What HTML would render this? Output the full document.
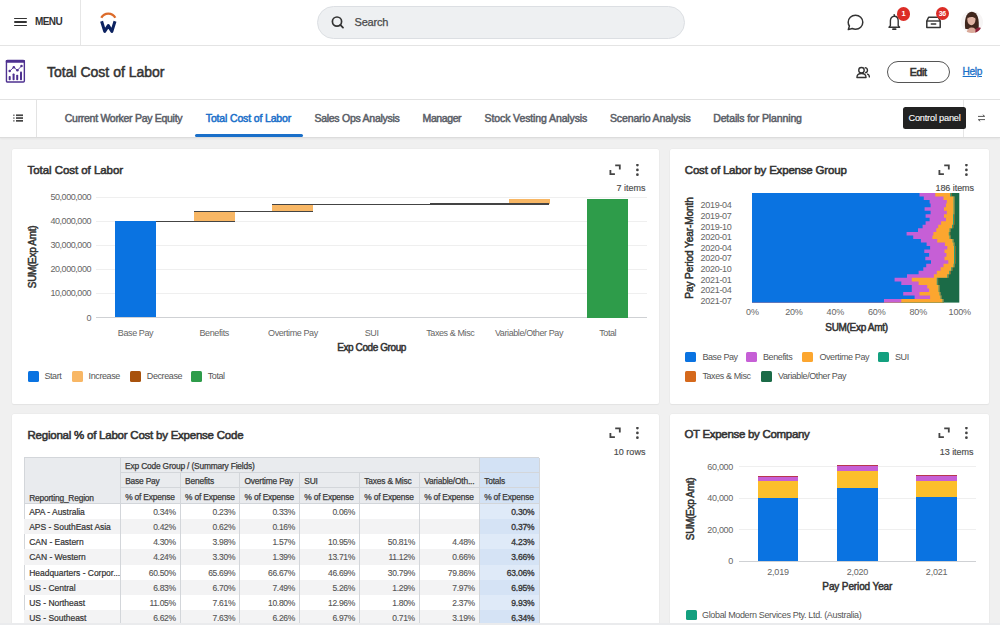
<!DOCTYPE html>
<html><head><meta charset="utf-8">
<style>
*{box-sizing:border-box;margin:0;padding:0}
html,body{width:1000px;height:625px;overflow:hidden;background:#f0f0f0;font-family:"Liberation Sans",sans-serif;color:#333}
.a{position:absolute}
.t{position:absolute;white-space:nowrap;line-height:20px;height:20px}
.b{font-weight:700}
#hdr{left:0;top:0;width:1000px;height:46px;background:#fff;border-bottom:1px solid #e4e4e4;box-shadow:0 1px 2px rgba(0,0,0,.04)}
#ttl{left:0;top:46px;width:1000px;height:54px;background:#fff;border-bottom:1px solid #e2e2e2}
#tabs{left:0;top:100px;width:1000px;height:38px;background:#fff;border-bottom:1px solid #dcdcdc;box-shadow:0 1px 2px rgba(0,0,0,.05)}
.card{position:absolute;background:#fff;border-radius:2px;box-shadow:0 0 0 0.5px #e8e8e8,0 1px 1px rgba(0,0,0,.07)}
.tab{top:107.6px;font-size:10.5px;font-weight:400;color:#5b6068;-webkit-text-stroke:0.5px #5b6068;letter-spacing:-0.29px}
.ctitle{font-size:11.5px;font-weight:400;color:#333;-webkit-text-stroke:0.55px #333;letter-spacing:-0.05px}
.ax{font-size:10px;font-weight:400;color:#333;-webkit-text-stroke:0.5px #333}
.sm{font-size:9px;color:#666;letter-spacing:-0.4px}
.grid{position:absolute;height:1px;background:#e8e8e8}
</style></head><body>

<!-- HEADER -->
<div id="hdr" class="a"></div>
<div class="a" style="left:14px;top:17.6px;width:13px;height:1.35px;background:#333;border-radius:1px"></div>
<div class="a" style="left:14px;top:21.4px;width:13px;height:1.35px;background:#333;border-radius:1px"></div>
<div class="a" style="left:14px;top:25.1px;width:13px;height:1.35px;background:#333;border-radius:1px"></div>
<div class="t b" style="left:35px;top:11.8px;font-size:10px;letter-spacing:-0.6px;color:#333">MENU</div>
<div class="a" style="left:80px;top:0;width:1px;height:45px;background:#e6e6e6"></div>
<svg class="a" style="left:98px;top:9px" width="22" height="26" viewBox="0 0 22 26">
  <path d="M3.3 8.8 A7.9 7.9 0 0 1 17.3 8.8" fill="none" stroke="#dc6b2a" stroke-width="2.3"/>
  <path d="M3.6 12.2 L6.7 22.4 L10.3 16.6 L13.9 22.4 L17 12.2" fill="none" stroke="#0c2260" stroke-width="3" stroke-linejoin="round"/>
</svg>
<div class="a" style="left:317px;top:5.5px;width:368px;height:33px;border-radius:17px;background:#eef0f2;border:1px solid #dcdfe3"></div>
<svg class="a" style="left:330px;top:15px" width="16" height="16" viewBox="0 0 16 16">
  <circle cx="7" cy="6.6" r="4.6" fill="none" stroke="#333" stroke-width="1.7"/>
  <path d="M10.3 9.9 L13 12.6" stroke="#333" stroke-width="1.8" stroke-linecap="round"/>
</svg>
<div class="t" style="left:354.5px;top:12px;font-size:11px;letter-spacing:-0.2px;color:#4a4a4a;-webkit-text-stroke:0.25px #4a4a4a">Search</div>

<!-- chat -->
<svg class="a" style="left:846px;top:13px" width="19" height="19" viewBox="0 0 19 19">
  <path d="M9.5 2.2 C13.6 2.2 16.8 5.2 16.8 9.2 C16.8 13.2 13.6 16.2 9.5 16.2 C8.3 16.2 7.2 15.9 6.2 15.5 L2.3 16.6 L3.4 13 C2.6 11.9 2.2 10.6 2.2 9.2 C2.2 5.2 5.4 2.2 9.5 2.2 Z" fill="none" stroke="#333" stroke-width="1.5" stroke-linejoin="round"/>
</svg>
<!-- bell -->
<svg class="a" style="left:886px;top:13px" width="17" height="18" viewBox="0 0 17 18">
  <path d="M4.4 12.6 L4.4 7.8 C4.4 5.2 6 3.3 8.3 3.3 C10.6 3.3 12.2 5.2 12.2 7.8 L12.2 12.6 L13.6 14.2 L3 14.2 Z" fill="none" stroke="#333" stroke-width="1.4" stroke-linejoin="round"/>
  <path d="M7 16.2 L9.6 16.2" stroke="#333" stroke-width="1.8" stroke-linecap="round"/>
  <path d="M8.3 1.6 L8.3 3" stroke="#333" stroke-width="1.4" stroke-linecap="round"/>
</svg>
<div class="a" style="left:896.7px;top:7px;width:13.6px;height:13.6px;border-radius:50%;background:#dc2d26"></div>
<div class="t b" style="left:896.7px;top:3.8px;width:13.6px;text-align:center;font-size:7.5px;color:#fff">1</div>
<!-- inbox -->
<svg class="a" style="left:925px;top:14px" width="17" height="16" viewBox="0 0 17 16">
  <path d="M1.8 7 L3.6 3.2 L13.4 3.2 L15.2 7 L15.2 13.6 L1.8 13.6 Z" fill="none" stroke="#333" stroke-width="1.5" stroke-linejoin="round"/>
  <path d="M1.8 7 L15.2 7" stroke="#333" stroke-width="1.4"/>
  <path d="M6.3 10 L10.7 10" stroke="#333" stroke-width="1.5" stroke-linecap="round"/>
</svg>
<div class="a" style="left:935.5px;top:6.7px;width:13.6px;height:13.6px;border-radius:50%;background:#dc2d26"></div>
<div class="t b" style="left:935.5px;top:3.5px;width:13.6px;text-align:center;font-size:7px;letter-spacing:-0.3px;color:#fff">36</div>
<!-- avatar -->
<svg class="a" style="left:961px;top:11px" width="22" height="22" viewBox="0 0 22 22">
  <defs><clipPath id="av"><circle cx="11" cy="11" r="11"/></clipPath></defs>
  <g clip-path="url(#av)">
    <rect width="22" height="22" fill="#f7f5f5"/>
    <path d="M4.2 17.8 C3.2 10 4.5 1.2 10.8 0.8 C17 1 18.4 9 17.6 17.8 C15 18.6 7 18.6 4.2 17.8 Z" fill="#3f261c"/>
    <path d="M5.5 22 C6 18.5 8 16.5 10.6 16.5 C13.5 16.5 15.6 18.5 16 22 Z" fill="#d9a999"/>
    <ellipse cx="10.4" cy="8.6" rx="4.1" ry="5.6" fill="#dfb3a3"/>
    <path d="M6.3 7.2 C6.8 3.6 8.8 2.6 11 2.7 C13.2 2.9 14.6 4.6 14.6 7.6 C13 5.8 9.5 5.3 6.3 7.2 Z" fill="#3f261c"/>
    <path d="M14.2 22 L14.6 18.2 C16 16.6 18 16.2 19.6 16.8 L20.5 22 Z" fill="#8c2038"/>
  </g>
</svg>

<!-- TITLE BAR -->
<div id="ttl" class="a"></div>
<svg class="a" style="left:5px;top:58.5px" width="21" height="25" viewBox="0 0 21 25">
  <rect x="1.45" y="1.55" width="17.9" height="21.4" rx="1" fill="#fff" stroke="#4e3190" stroke-width="1.4"/>
  <rect x="0.8" y="0.9" width="19.2" height="2.9" rx="0.8" fill="#4e3190"/>
  <path d="M4.7 12.1 L8.8 8.3 L12.4 11.3 L16.5 7" fill="none" stroke="#4e3190" stroke-width="0.9"/>
  <circle cx="4.7" cy="12.1" r="1.25" fill="#4e3190"/><circle cx="8.8" cy="8.3" r="1.25" fill="#4e3190"/><circle cx="12.4" cy="11.3" r="1.25" fill="#4e3190"/><circle cx="16.5" cy="7" r="1.25" fill="#4e3190"/>
  <rect x="3.7" y="17" width="2" height="4.2" rx="0.8" fill="#4e3190"/>
  <rect x="7.6" y="14.4" width="2" height="6.8" rx="0.8" fill="#4e3190"/>
  <rect x="11.2" y="15.7" width="2" height="5.5" rx="0.8" fill="#4e3190"/>
  <rect x="15" y="12.6" width="2" height="8.6" rx="0.8" fill="#4e3190"/>
</svg>
<div class="t" style="left:47px;top:61.5px;font-size:14px;letter-spacing:0px;color:#333;-webkit-text-stroke:0.5px #333">Total Cost of Labor</div>
<svg class="a" style="left:855.6px;top:66px" width="14.6" height="12.8" viewBox="0 0 16 14">
  <circle cx="6" cy="4.6" r="3" fill="none" stroke="#333" stroke-width="1.5"/>
  <path d="M1 12.6 C1 9.4 3.2 8.2 6 8.2 C8.8 8.2 11 9.4 11 12.6 Z" fill="none" stroke="#333" stroke-width="1.5" stroke-linejoin="round"/>
  <path d="M9.6 1.8 C11.6 1.9 12.6 3.2 12.6 4.6 C12.6 6 11.6 7.2 10 7.4" fill="none" stroke="#333" stroke-width="1.5"/>
  <path d="M12.2 8.6 C13.8 9.2 14.8 10.4 14.8 12.6" fill="none" stroke="#333" stroke-width="1.5"/>
</svg>
<div class="a" style="left:886.5px;top:60.8px;width:63.5px;height:22px;border-radius:11px;border:1.3px solid #555;background:#fff"></div>
<div class="t" style="left:886.5px;top:62px;width:63.5px;text-align:center;font-size:10.5px;letter-spacing:-0.3px;color:#333;-webkit-text-stroke:0.6px #333">Edit</div>
<div class="t" style="left:962.6px;top:62px;font-size:10.2px;letter-spacing:-0.4px;color:#1a70c8;-webkit-text-stroke:0.3px #1a70c8;text-decoration:underline;text-underline-offset:1px">Help</div>

<!-- TABS -->
<div id="tabs" class="a"></div>
<svg class="a" style="left:12px;top:113px" width="12" height="10" viewBox="0 0 12 10">
  <rect x="1.1" y="1.5" width="1.5" height="1.5" fill="#777"/><rect x="4" y="1.4" width="7" height="1.7" fill="#444"/>
  <rect x="1.1" y="4.3" width="1.5" height="1.5" fill="#777"/><rect x="4" y="4.2" width="7" height="1.7" fill="#444"/>
  <rect x="1.1" y="7.1" width="1.5" height="1.5" fill="#777"/><rect x="4" y="7" width="7" height="1.7" fill="#444"/>
</svg>
<div class="a" style="left:36px;top:100px;width:1px;height:37px;background:#e3e3e3"></div>
<div class="t tab" style="left:64.8px;letter-spacing:-0.29px">Current Worker Pay Equity</div>
<div class="t tab" style="left:205.8px;color:#1a6fc9;-webkit-text-stroke:0.5px #1a6fc9;letter-spacing:-0.15px">Total Cost of Labor</div>
<div class="a" style="left:194.5px;top:134.2px;width:108px;height:3px;border-radius:2px;background:#1a6fc9"></div>
<div class="t tab" style="left:314.4px;letter-spacing:-0.26px">Sales Ops Analysis</div>
<div class="t tab" style="left:422.6px;letter-spacing:-0.41px">Manager</div>
<div class="t tab" style="left:484.6px;letter-spacing:-0.11px">Stock Vesting Analysis</div>
<div class="t tab" style="left:610px;letter-spacing:-0.13px">Scenario Analysis</div>
<div class="t tab" style="left:713.2px;letter-spacing:-0.12px">Details for Planning</div>
<div class="a" style="left:962.5px;top:100px;width:1px;height:37px;background:#e6e6e6"></div>
<div class="a" style="left:903px;top:107px;width:63px;height:21.6px;border-radius:2.5px;background:#222"></div>
<div class="t" style="left:908.5px;top:108.3px;font-size:9.2px;letter-spacing:-0.2px;color:#fff;-webkit-text-stroke:0.1px #fff">Control panel</div>
<svg class="a" style="left:977px;top:114px" width="9" height="8" viewBox="0 0 9 8">
  <path d="M1 2.4 L7.6 2.4 M5.8 0.8 L7.8 2.4" fill="none" stroke="#555" stroke-width="1"/>
  <path d="M8 5.6 L1.4 5.6 M3.2 7.2 L1.2 5.6" fill="none" stroke="#555" stroke-width="1"/>
</svg>

<!-- CARDS -->
<div class="card" style="left:12px;top:149px;width:647px;height:254.5px"></div>
<div class="card" style="left:669.5px;top:149px;width:319px;height:254.5px"></div>
<div class="card" style="left:12px;top:413.5px;width:647px;height:220px"></div>
<div class="card" style="left:669.5px;top:413.5px;width:319px;height:220px"></div>

<!-- CARD1 CONTENT -->
<div class="t ctitle" style="left:27.5px;top:160px">Total Cost of Labor</div>
<svg class="a" style="left:608.5px;top:163.5px" width="34" height="13" viewBox="0 0 34 13"><path d="M6.2 1.4 L10.8 1.4 L10.8 5.6" fill="none" stroke="#444" stroke-width="1.8"/><path d="M1.4 6 L1.4 10.1 L5.9 10.1" fill="none" stroke="#444" stroke-width="1.8"/><circle cx="28.4" cy="1.1" r="1.35" fill="#444"/><circle cx="28.4" cy="5.9" r="1.35" fill="#444"/><circle cx="28.4" cy="10.7" r="1.35" fill="#444"/></svg>
<div class="t sm" style="left:545px;width:100.5px;text-align:right;top:177.5px;color:#4a4a4a;-webkit-text-stroke:0.15px #4a4a4a;letter-spacing:0">7 items</div>
<div class="grid" style="left:96px;top:317.00px;width:551px;background:#cfd1d4"></div>
<div class="t sm" style="left:20px;width:71px;text-align:right;top:307.50px;letter-spacing:-0.45px">0</div>
<div class="grid" style="left:96px;top:292.90px;width:551px;background:#efefef"></div>
<div class="t sm" style="left:20px;width:71px;text-align:right;top:283.40px;letter-spacing:-0.45px">10,000,000</div>
<div class="grid" style="left:96px;top:268.80px;width:551px;background:#efefef"></div>
<div class="t sm" style="left:20px;width:71px;text-align:right;top:259.30px;letter-spacing:-0.45px">20,000,000</div>
<div class="grid" style="left:96px;top:244.70px;width:551px;background:#efefef"></div>
<div class="t sm" style="left:20px;width:71px;text-align:right;top:235.20px;letter-spacing:-0.45px">30,000,000</div>
<div class="grid" style="left:96px;top:220.60px;width:551px;background:#efefef"></div>
<div class="t sm" style="left:20px;width:71px;text-align:right;top:211.10px;letter-spacing:-0.45px">40,000,000</div>
<div class="grid" style="left:96px;top:196.50px;width:551px;background:#efefef"></div>
<div class="t sm" style="left:20px;width:71px;text-align:right;top:187.00px;letter-spacing:-0.45px">50,000,000</div>
<div class="t ax" style="left:-7.5px;top:247.4px;width:80px;text-align:center;letter-spacing:-0.31px;transform:rotate(-90deg)">SUM(Exp Amt)</div>
<div class="a" style="left:193.70px;top:211.60px;width:41px;height:10.00px;background:#f8b765"></div>
<div class="a" style="left:272.40px;top:204.60px;width:41px;height:7.20px;background:#f8b765"></div>
<div class="a" style="left:351.10px;top:204.20px;width:41px;height:0.40px;background:#f8b765"></div>
<div class="a" style="left:429.80px;top:203.80px;width:41px;height:0.60px;background:#f8b765"></div>
<div class="a" style="left:508.50px;top:198.80px;width:41px;height:5.00px;background:#f8b765"></div>
<div class="a" style="left:115.00px;top:220.80px;width:119.70px;height:1.7px;background:#444"></div>
<div class="a" style="left:193.70px;top:210.80px;width:119.70px;height:1.7px;background:#444"></div>
<div class="a" style="left:272.40px;top:203.70px;width:119.70px;height:1.7px;background:#444"></div>
<div class="a" style="left:351.10px;top:203.50px;width:119.70px;height:1.7px;background:#444"></div>
<div class="a" style="left:429.80px;top:203.00px;width:119.70px;height:1.7px;background:#444"></div>
<div class="a" style="left:115.00px;top:220.90px;width:41px;height:96.60px;background:#0a73e1"></div>
<div class="a" style="left:587.20px;top:199.00px;width:41px;height:118.50px;background:#2e9c4a"></div>
<div class="t sm" style="left:85.50px;width:100px;text-align:center;top:323px">Base Pay</div>
<div class="t sm" style="left:164.20px;width:100px;text-align:center;top:323px">Benefits</div>
<div class="t sm" style="left:242.90px;width:100px;text-align:center;top:323px">Overtime Pay</div>
<div class="t sm" style="left:321.60px;width:100px;text-align:center;top:323px">SUI</div>
<div class="t sm" style="left:400.30px;width:100px;text-align:center;top:323px">Taxes &amp; Misc</div>
<div class="t sm" style="left:479.00px;width:100px;text-align:center;top:323px">Variable/Other Pay</div>
<div class="t sm" style="left:557.70px;width:100px;text-align:center;top:323px">Total</div>
<div class="t ax" style="left:321.6px;width:100px;text-align:center;top:337.8px;letter-spacing:-0.41px">Exp Code Group</div>
<div class="a" style="left:27.6px;top:370.8px;width:11px;height:11px;border-radius:1.5px;background:#0a73e1"></div>
<div class="t sm" style="left:44.4px;top:366.4px;color:#555">Start</div>
<div class="a" style="left:72px;top:370.8px;width:11px;height:11px;border-radius:1.5px;background:#f8b765"></div>
<div class="t sm" style="left:88.6px;top:366.4px;color:#555">Increase</div>
<div class="a" style="left:130px;top:370.8px;width:11px;height:11px;border-radius:1.5px;background:#a8520d"></div>
<div class="t sm" style="left:146.8px;top:366.4px;color:#555">Decrease</div>
<div class="a" style="left:191px;top:370.8px;width:11px;height:11px;border-radius:1.5px;background:#2e9c4a"></div>
<div class="t sm" style="left:207.7px;top:366.4px;color:#555">Total</div>
<!-- /CARD1 --><!-- /CARD1 --><!-- /CARD1 --><!-- /CARD1 --><!-- /CARD1 --><!-- /CARD1 --><!-- /CARD1 -->
<!-- CARD2 CONTENT -->
<div class="t ctitle" style="left:684.8px;top:160px;letter-spacing:-0.19px">Cost of Labor by Expense Group</div>
<svg class="a" style="left:937.5px;top:163.5px" width="34" height="13" viewBox="0 0 34 13"><path d="M6.2 1.4 L10.8 1.4 L10.8 5.6" fill="none" stroke="#444" stroke-width="1.8"/><path d="M1.4 6 L1.4 10.1 L5.9 10.1" fill="none" stroke="#444" stroke-width="1.8"/><circle cx="28.4" cy="1.1" r="1.35" fill="#444"/><circle cx="28.4" cy="5.9" r="1.35" fill="#444"/><circle cx="28.4" cy="10.7" r="1.35" fill="#444"/></svg>
<div class="t sm" style="left:874px;width:100px;text-align:right;top:178px;color:#4a4a4a;-webkit-text-stroke:0.15px #4a4a4a;letter-spacing:-0.05px">186 items</div>
<svg class="a" style="left:752.4px;top:193.0px" width="207.3" height="110" viewBox="0 0 207.30 110"><rect x="0" y="0" width="207.30" height="109.60" fill="#1b6b47"/><path d="M0.00 0.00 L199.60 0.00 L199.60 3.54 L203.00 3.54 L203.00 7.07 L203.00 7.07 L203.00 10.61 L203.00 10.61 L203.00 14.14 L203.00 14.14 L203.00 17.68 L203.00 17.68 L203.00 21.21 L202.50 21.21 L202.50 24.75 L202.50 24.75 L202.50 28.28 L202.50 28.28 L202.50 31.82 L201.50 31.82 L201.50 35.35 L199.00 35.35 L199.00 38.89 L198.20 38.89 L198.20 42.43 L199.00 42.43 L199.00 45.96 L202.00 45.96 L202.00 49.50 L203.00 49.50 L203.00 53.03 L203.50 53.03 L203.50 56.57 L203.50 56.57 L203.50 60.10 L203.50 60.10 L203.50 63.64 L203.50 63.64 L203.50 67.17 L203.50 67.17 L203.50 70.71 L203.00 70.71 L203.00 74.25 L200.60 74.25 L200.60 77.78 L198.70 77.78 L198.70 81.32 L196.70 81.32 L196.70 84.85 L186.20 84.85 L186.20 88.39 L186.20 88.39 L186.20 91.92 L188.00 91.92 L188.00 95.46 L188.00 95.46 L188.00 98.99 L189.00 98.99 L189.00 102.53 L190.00 102.53 L190.00 106.06 L192.00 106.06 L192.00 109.60 L0.00 109.60 Z" fill="#d5691c"/><path d="M0.00 0.00 L199.10 0.00 L199.10 3.54 L202.50 3.54 L202.50 7.07 L202.50 7.07 L202.50 10.61 L202.50 10.61 L202.50 14.14 L202.50 14.14 L202.50 17.68 L202.50 17.68 L202.50 21.21 L202.00 21.21 L202.00 24.75 L202.00 24.75 L202.00 28.28 L202.00 28.28 L202.00 31.82 L201.00 31.82 L201.00 35.35 L198.50 35.35 L198.50 38.89 L197.70 38.89 L197.70 42.43 L198.50 42.43 L198.50 45.96 L201.50 45.96 L201.50 49.50 L202.50 49.50 L202.50 53.03 L203.00 53.03 L203.00 56.57 L203.00 56.57 L203.00 60.10 L203.00 60.10 L203.00 63.64 L203.00 63.64 L203.00 67.17 L203.00 67.17 L203.00 70.71 L202.50 70.71 L202.50 74.25 L200.10 74.25 L200.10 77.78 L198.20 77.78 L198.20 81.32 L196.20 81.32 L196.20 84.85 L185.70 84.85 L185.70 88.39 L185.70 88.39 L185.70 91.92 L187.50 91.92 L187.50 95.46 L187.50 95.46 L187.50 98.99 L188.50 98.99 L188.50 102.53 L189.50 102.53 L189.50 106.06 L191.50 106.06 L191.50 109.60 L0.00 109.60 Z" fill="#13a07f"/><path d="M0.00 0.00 L198.20 0.00 L198.20 3.54 L201.60 3.54 L201.60 7.07 L201.60 7.07 L201.60 10.61 L201.60 10.61 L201.60 14.14 L201.60 14.14 L201.60 17.68 L201.60 17.68 L201.60 21.21 L201.10 21.21 L201.10 24.75 L201.10 24.75 L201.10 28.28 L201.10 28.28 L201.10 31.82 L200.10 31.82 L200.10 35.35 L197.60 35.35 L197.60 38.89 L196.80 38.89 L196.80 42.43 L197.60 42.43 L197.60 45.96 L200.60 45.96 L200.60 49.50 L201.60 49.50 L201.60 53.03 L202.10 53.03 L202.10 56.57 L202.10 56.57 L202.10 60.10 L202.10 60.10 L202.10 63.64 L202.10 63.64 L202.10 67.17 L202.10 67.17 L202.10 70.71 L201.60 70.71 L201.60 74.25 L199.20 74.25 L199.20 77.78 L197.30 77.78 L197.30 81.32 L195.30 81.32 L195.30 84.85 L184.80 84.85 L184.80 88.39 L184.80 88.39 L184.80 91.92 L186.60 91.92 L186.60 95.46 L186.60 95.46 L186.60 98.99 L187.60 98.99 L187.60 102.53 L188.60 102.53 L188.60 106.06 L190.60 106.06 L190.60 109.60 L0.00 109.60 Z" fill="#fca62f"/><path d="M0.00 0.00 L183.30 0.00 L183.30 3.54 L191.50 3.54 L191.50 7.07 L194.80 7.07 L194.80 10.61 L193.90 10.61 L193.90 14.14 L192.00 14.14 L192.00 17.68 L194.80 17.68 L194.80 21.21 L192.00 21.21 L192.00 24.75 L193.90 24.75 L193.90 28.28 L189.10 28.28 L189.10 31.82 L186.20 31.82 L186.20 35.35 L184.30 35.35 L184.30 38.89 L181.40 38.89 L181.40 42.43 L180.40 42.43 L180.40 45.96 L185.20 45.96 L185.20 49.50 L192.90 49.50 L192.90 53.03 L195.30 53.03 L195.30 56.57 L192.50 56.57 L192.50 60.10 L194.40 60.10 L194.40 63.64 L192.50 63.64 L192.50 67.17 L196.30 67.17 L196.30 70.71 L191.50 70.71 L191.50 74.25 L188.60 74.25 L188.60 77.78 L184.80 77.78 L184.80 81.32 L181.90 81.32 L181.90 84.85 L159.80 84.85 L159.80 88.39 L166.60 88.39 L166.60 91.92 L175.20 91.92 L175.20 95.46 L177.10 95.46 L177.10 98.99 L167.50 98.99 L167.50 102.53 L178.10 102.53 L178.10 106.06 L149.30 106.06 L149.30 109.60 L0.00 109.60 Z" fill="#c65fd6"/><path d="M0.00 0.00 L167.50 0.00 L167.50 3.54 L171.80 3.54 L171.80 7.07 L177.60 7.07 L177.60 10.61 L178.60 10.61 L178.60 14.14 L172.60 14.14 L172.60 17.68 L178.60 17.68 L178.60 21.21 L173.60 21.21 L173.60 24.75 L177.60 24.75 L177.60 28.28 L173.60 28.28 L173.60 31.82 L170.60 31.82 L170.60 35.35 L166.00 35.35 L166.00 38.89 L154.60 38.89 L154.60 42.43 L161.20 42.43 L161.20 45.96 L168.90 45.96 L168.90 49.50 L174.60 49.50 L174.60 53.03 L178.10 53.03 L178.10 56.57 L172.30 56.57 L172.30 60.10 L177.10 60.10 L177.10 63.64 L173.30 63.64 L173.30 67.17 L179.00 67.17 L179.00 70.71 L174.20 70.71 L174.20 74.25 L171.30 74.25 L171.30 77.78 L166.60 77.78 L166.60 81.32 L155.00 81.32 L155.00 84.85 L142.60 84.85 L142.60 88.39 L149.30 88.39 L149.30 91.92 L159.80 91.92 L159.80 95.46 L159.80 95.46 L159.80 98.99 L151.20 98.99 L151.20 102.53 L162.60 102.53 L162.60 106.06 L132.00 106.06 L132.00 109.60 L0.00 109.60 Z" fill="#0a73e1"/></svg>
<div class="t sm" style="left:680px;width:51.5px;text-align:right;top:195.37px;letter-spacing:-0.3px">2019-04</div>
<div class="t sm" style="left:680px;width:51.5px;text-align:right;top:205.98px;letter-spacing:-0.3px">2019-07</div>
<div class="t sm" style="left:680px;width:51.5px;text-align:right;top:216.59px;letter-spacing:-0.3px">2019-10</div>
<div class="t sm" style="left:680px;width:51.5px;text-align:right;top:227.19px;letter-spacing:-0.3px">2020-01</div>
<div class="t sm" style="left:680px;width:51.5px;text-align:right;top:237.80px;letter-spacing:-0.3px">2020-04</div>
<div class="t sm" style="left:680px;width:51.5px;text-align:right;top:248.41px;letter-spacing:-0.3px">2020-07</div>
<div class="t sm" style="left:680px;width:51.5px;text-align:right;top:259.01px;letter-spacing:-0.3px">2020-10</div>
<div class="t sm" style="left:680px;width:51.5px;text-align:right;top:269.62px;letter-spacing:-0.3px">2021-01</div>
<div class="t sm" style="left:680px;width:51.5px;text-align:right;top:280.23px;letter-spacing:-0.3px">2021-04</div>
<div class="t sm" style="left:680px;width:51.5px;text-align:right;top:290.83px;letter-spacing:-0.3px">2021-07</div>
<div class="t sm" style="left:727.40px;width:50px;text-align:center;top:302px;letter-spacing:-0.2px">0%</div>
<div class="t sm" style="left:768.86px;width:50px;text-align:center;top:302px;letter-spacing:-0.2px">20%</div>
<div class="t sm" style="left:810.32px;width:50px;text-align:center;top:302px;letter-spacing:-0.2px">40%</div>
<div class="t sm" style="left:851.78px;width:50px;text-align:center;top:302px;letter-spacing:-0.2px">60%</div>
<div class="t sm" style="left:893.24px;width:50px;text-align:center;top:302px;letter-spacing:-0.2px">80%</div>
<div class="t sm" style="left:934.70px;width:50px;text-align:center;top:302px;letter-spacing:-0.2px">100%</div>
<div class="t ax" style="left:806.5px;width:100px;text-align:center;top:318px;letter-spacing:-0.31px">SUM(Exp Amt)</div>
<div class="t ax" style="left:630px;top:237.7px;width:120px;text-align:center;letter-spacing:-0.07px;transform:rotate(-90deg)">Pay Period Year-Month</div>
<div class="a" style="left:685.4px;top:351.8px;width:11px;height:10.5px;border-radius:1.5px;background:#0a73e1"></div>
<div class="t sm" style="left:702.4px;top:347.00px;color:#555">Base Pay</div>
<div class="a" style="left:746px;top:351.8px;width:11px;height:10.5px;border-radius:1.5px;background:#c65fd6"></div>
<div class="t sm" style="left:763px;top:347.00px;color:#555">Benefits</div>
<div class="a" style="left:802.4px;top:351.8px;width:11px;height:10.5px;border-radius:1.5px;background:#fca62f"></div>
<div class="t sm" style="left:819.4px;top:347.00px;color:#555">Overtime Pay</div>
<div class="a" style="left:878.4px;top:351.8px;width:11px;height:10.5px;border-radius:1.5px;background:#13a07f"></div>
<div class="t sm" style="left:895px;top:347.00px;color:#555">SUI</div>
<div class="a" style="left:685.4px;top:371px;width:11px;height:10.5px;border-radius:1.5px;background:#d5691c"></div>
<div class="t sm" style="left:702.4px;top:366.20px;color:#555">Taxes &amp; Misc</div>
<div class="a" style="left:761px;top:371px;width:11px;height:10.5px;border-radius:1.5px;background:#1b6b47"></div>
<div class="t sm" style="left:778px;top:366.20px;color:#555">Variable/Other Pay</div>
<!-- /CARD2 -->
<!-- CARD3 CONTENT -->
<div class="t ctitle" style="left:27.5px;top:424.5px;letter-spacing:-0.23px">Regional % of Labor Cost by Expense Code</div>
<svg class="a" style="left:608.7px;top:427.3px" width="34" height="13" viewBox="0 0 34 13"><path d="M6.2 1.4 L10.8 1.4 L10.8 5.6" fill="none" stroke="#444" stroke-width="1.8"/><path d="M1.4 6 L1.4 10.1 L5.9 10.1" fill="none" stroke="#444" stroke-width="1.8"/><circle cx="28.4" cy="1.1" r="1.35" fill="#444"/><circle cx="28.4" cy="5.9" r="1.35" fill="#444"/><circle cx="28.4" cy="10.7" r="1.35" fill="#444"/></svg>
<div class="t sm" style="left:545px;width:100.5px;text-align:right;top:442.2px;color:#4a4a4a;-webkit-text-stroke:0.15px #4a4a4a;letter-spacing:0.05px">10 rows</div>
<div class="a" style="left:24.4px;top:457.7px;width:514.6px;height:45.9px;background:#e9ebee"></div>
<div class="a" style="left:479.5px;top:457.7px;width:59.5px;height:45.9px;background:#d3e2f5"></div>
<div class="a" style="left:24.4px;top:457.2px;width:514.6px;height:1px;background:#d3d6da"></div>
<div class="a" style="left:23.9px;top:457.7px;width:1px;height:167.3px;background:#d3d6da"></div>
<div class="a" style="left:120.5px;top:471.8px;width:418.5px;height:1px;background:#d3d6da"></div>
<div class="a" style="left:120.5px;top:487.1px;width:418.5px;height:1px;background:#d3d6da"></div>
<div class="a" style="left:24.4px;top:503.1px;width:514.6px;height:1px;background:#d3d6da"></div>
<div class="a" style="left:479.5px;top:503.60px;width:59.5px;height:15.25px;background:#dfeaf8"></div>
<div class="t" style="left:29.2px;top:501.73px;font-size:8.5px;letter-spacing:-0.03px;color:#333;-webkit-text-stroke:0.2px #333">APA - Australia</div>
<div class="t" style="left:115.80px;width:60px;text-align:right;top:501.73px;font-size:8.5px;color:#555;-webkit-text-stroke:0.12px #555;letter-spacing:-0.3px">0.34%</div>
<div class="t" style="left:175.20px;width:60px;text-align:right;top:501.73px;font-size:8.5px;color:#555;-webkit-text-stroke:0.12px #555;letter-spacing:-0.3px">0.23%</div>
<div class="t" style="left:235.00px;width:60px;text-align:right;top:501.73px;font-size:8.5px;color:#555;-webkit-text-stroke:0.12px #555;letter-spacing:-0.3px">0.33%</div>
<div class="t" style="left:295.00px;width:60px;text-align:right;top:501.73px;font-size:8.5px;color:#555;-webkit-text-stroke:0.12px #555;letter-spacing:-0.3px">0.06%</div>
<div class="t" style="left:474.40px;width:60px;text-align:right;top:501.73px;font-size:8.5px;color:#333;-webkit-text-stroke:0.3px #333;letter-spacing:-0.2px">0.30%</div>
<div class="a" style="left:24.4px;top:518.85px;width:455.1px;height:15.25px;background:#f3f3f4"></div>
<div class="a" style="left:479.5px;top:518.85px;width:59.5px;height:15.25px;background:#d5e3f5"></div>
<div class="t" style="left:29.2px;top:516.98px;font-size:8.5px;letter-spacing:-0.03px;color:#333;-webkit-text-stroke:0.2px #333">APS - SouthEast Asia</div>
<div class="t" style="left:115.80px;width:60px;text-align:right;top:516.98px;font-size:8.5px;color:#555;-webkit-text-stroke:0.12px #555;letter-spacing:-0.3px">0.42%</div>
<div class="t" style="left:175.20px;width:60px;text-align:right;top:516.98px;font-size:8.5px;color:#555;-webkit-text-stroke:0.12px #555;letter-spacing:-0.3px">0.62%</div>
<div class="t" style="left:235.00px;width:60px;text-align:right;top:516.98px;font-size:8.5px;color:#555;-webkit-text-stroke:0.12px #555;letter-spacing:-0.3px">0.16%</div>
<div class="t" style="left:474.40px;width:60px;text-align:right;top:516.98px;font-size:8.5px;color:#333;-webkit-text-stroke:0.3px #333;letter-spacing:-0.2px">0.37%</div>
<div class="a" style="left:479.5px;top:534.10px;width:59.5px;height:15.25px;background:#dfeaf8"></div>
<div class="t" style="left:29.2px;top:532.23px;font-size:8.5px;letter-spacing:-0.03px;color:#333;-webkit-text-stroke:0.2px #333">CAN - Eastern</div>
<div class="t" style="left:115.80px;width:60px;text-align:right;top:532.23px;font-size:8.5px;color:#555;-webkit-text-stroke:0.12px #555;letter-spacing:-0.3px">4.30%</div>
<div class="t" style="left:175.20px;width:60px;text-align:right;top:532.23px;font-size:8.5px;color:#555;-webkit-text-stroke:0.12px #555;letter-spacing:-0.3px">3.98%</div>
<div class="t" style="left:235.00px;width:60px;text-align:right;top:532.23px;font-size:8.5px;color:#555;-webkit-text-stroke:0.12px #555;letter-spacing:-0.3px">1.57%</div>
<div class="t" style="left:295.00px;width:60px;text-align:right;top:532.23px;font-size:8.5px;color:#555;-webkit-text-stroke:0.12px #555;letter-spacing:-0.3px">10.95%</div>
<div class="t" style="left:354.90px;width:60px;text-align:right;top:532.23px;font-size:8.5px;color:#555;-webkit-text-stroke:0.12px #555;letter-spacing:-0.3px">50.81%</div>
<div class="t" style="left:414.90px;width:60px;text-align:right;top:532.23px;font-size:8.5px;color:#555;-webkit-text-stroke:0.12px #555;letter-spacing:-0.3px">4.48%</div>
<div class="t" style="left:474.40px;width:60px;text-align:right;top:532.23px;font-size:8.5px;color:#333;-webkit-text-stroke:0.3px #333;letter-spacing:-0.2px">4.23%</div>
<div class="a" style="left:24.4px;top:549.35px;width:455.1px;height:15.25px;background:#f3f3f4"></div>
<div class="a" style="left:479.5px;top:549.35px;width:59.5px;height:15.25px;background:#d5e3f5"></div>
<div class="t" style="left:29.2px;top:547.48px;font-size:8.5px;letter-spacing:-0.03px;color:#333;-webkit-text-stroke:0.2px #333">CAN - Western</div>
<div class="t" style="left:115.80px;width:60px;text-align:right;top:547.48px;font-size:8.5px;color:#555;-webkit-text-stroke:0.12px #555;letter-spacing:-0.3px">4.24%</div>
<div class="t" style="left:175.20px;width:60px;text-align:right;top:547.48px;font-size:8.5px;color:#555;-webkit-text-stroke:0.12px #555;letter-spacing:-0.3px">3.30%</div>
<div class="t" style="left:235.00px;width:60px;text-align:right;top:547.48px;font-size:8.5px;color:#555;-webkit-text-stroke:0.12px #555;letter-spacing:-0.3px">1.39%</div>
<div class="t" style="left:295.00px;width:60px;text-align:right;top:547.48px;font-size:8.5px;color:#555;-webkit-text-stroke:0.12px #555;letter-spacing:-0.3px">13.71%</div>
<div class="t" style="left:354.90px;width:60px;text-align:right;top:547.48px;font-size:8.5px;color:#555;-webkit-text-stroke:0.12px #555;letter-spacing:-0.3px">11.12%</div>
<div class="t" style="left:414.90px;width:60px;text-align:right;top:547.48px;font-size:8.5px;color:#555;-webkit-text-stroke:0.12px #555;letter-spacing:-0.3px">0.66%</div>
<div class="t" style="left:474.40px;width:60px;text-align:right;top:547.48px;font-size:8.5px;color:#333;-webkit-text-stroke:0.3px #333;letter-spacing:-0.2px">3.66%</div>
<div class="a" style="left:479.5px;top:564.60px;width:59.5px;height:15.25px;background:#dfeaf8"></div>
<div class="t" style="left:29.2px;top:562.73px;font-size:8.5px;letter-spacing:-0.03px;color:#333;-webkit-text-stroke:0.2px #333">Headquarters - Corpor...</div>
<div class="t" style="left:115.80px;width:60px;text-align:right;top:562.73px;font-size:8.5px;color:#555;-webkit-text-stroke:0.12px #555;letter-spacing:-0.3px">60.50%</div>
<div class="t" style="left:175.20px;width:60px;text-align:right;top:562.73px;font-size:8.5px;color:#555;-webkit-text-stroke:0.12px #555;letter-spacing:-0.3px">65.69%</div>
<div class="t" style="left:235.00px;width:60px;text-align:right;top:562.73px;font-size:8.5px;color:#555;-webkit-text-stroke:0.12px #555;letter-spacing:-0.3px">66.67%</div>
<div class="t" style="left:295.00px;width:60px;text-align:right;top:562.73px;font-size:8.5px;color:#555;-webkit-text-stroke:0.12px #555;letter-spacing:-0.3px">46.69%</div>
<div class="t" style="left:354.90px;width:60px;text-align:right;top:562.73px;font-size:8.5px;color:#555;-webkit-text-stroke:0.12px #555;letter-spacing:-0.3px">30.79%</div>
<div class="t" style="left:414.90px;width:60px;text-align:right;top:562.73px;font-size:8.5px;color:#555;-webkit-text-stroke:0.12px #555;letter-spacing:-0.3px">79.86%</div>
<div class="t" style="left:474.40px;width:60px;text-align:right;top:562.73px;font-size:8.5px;color:#333;-webkit-text-stroke:0.3px #333;letter-spacing:-0.2px">63.06%</div>
<div class="a" style="left:24.4px;top:579.85px;width:455.1px;height:15.25px;background:#f3f3f4"></div>
<div class="a" style="left:479.5px;top:579.85px;width:59.5px;height:15.25px;background:#d5e3f5"></div>
<div class="t" style="left:29.2px;top:577.98px;font-size:8.5px;letter-spacing:-0.03px;color:#333;-webkit-text-stroke:0.2px #333">US - Central</div>
<div class="t" style="left:115.80px;width:60px;text-align:right;top:577.98px;font-size:8.5px;color:#555;-webkit-text-stroke:0.12px #555;letter-spacing:-0.3px">6.83%</div>
<div class="t" style="left:175.20px;width:60px;text-align:right;top:577.98px;font-size:8.5px;color:#555;-webkit-text-stroke:0.12px #555;letter-spacing:-0.3px">6.70%</div>
<div class="t" style="left:235.00px;width:60px;text-align:right;top:577.98px;font-size:8.5px;color:#555;-webkit-text-stroke:0.12px #555;letter-spacing:-0.3px">7.49%</div>
<div class="t" style="left:295.00px;width:60px;text-align:right;top:577.98px;font-size:8.5px;color:#555;-webkit-text-stroke:0.12px #555;letter-spacing:-0.3px">5.26%</div>
<div class="t" style="left:354.90px;width:60px;text-align:right;top:577.98px;font-size:8.5px;color:#555;-webkit-text-stroke:0.12px #555;letter-spacing:-0.3px">1.29%</div>
<div class="t" style="left:414.90px;width:60px;text-align:right;top:577.98px;font-size:8.5px;color:#555;-webkit-text-stroke:0.12px #555;letter-spacing:-0.3px">7.97%</div>
<div class="t" style="left:474.40px;width:60px;text-align:right;top:577.98px;font-size:8.5px;color:#333;-webkit-text-stroke:0.3px #333;letter-spacing:-0.2px">6.95%</div>
<div class="a" style="left:479.5px;top:595.10px;width:59.5px;height:15.25px;background:#dfeaf8"></div>
<div class="t" style="left:29.2px;top:593.23px;font-size:8.5px;letter-spacing:-0.03px;color:#333;-webkit-text-stroke:0.2px #333">US - Northeast</div>
<div class="t" style="left:115.80px;width:60px;text-align:right;top:593.23px;font-size:8.5px;color:#555;-webkit-text-stroke:0.12px #555;letter-spacing:-0.3px">11.05%</div>
<div class="t" style="left:175.20px;width:60px;text-align:right;top:593.23px;font-size:8.5px;color:#555;-webkit-text-stroke:0.12px #555;letter-spacing:-0.3px">7.61%</div>
<div class="t" style="left:235.00px;width:60px;text-align:right;top:593.23px;font-size:8.5px;color:#555;-webkit-text-stroke:0.12px #555;letter-spacing:-0.3px">10.80%</div>
<div class="t" style="left:295.00px;width:60px;text-align:right;top:593.23px;font-size:8.5px;color:#555;-webkit-text-stroke:0.12px #555;letter-spacing:-0.3px">12.96%</div>
<div class="t" style="left:354.90px;width:60px;text-align:right;top:593.23px;font-size:8.5px;color:#555;-webkit-text-stroke:0.12px #555;letter-spacing:-0.3px">1.80%</div>
<div class="t" style="left:414.90px;width:60px;text-align:right;top:593.23px;font-size:8.5px;color:#555;-webkit-text-stroke:0.12px #555;letter-spacing:-0.3px">2.37%</div>
<div class="t" style="left:474.40px;width:60px;text-align:right;top:593.23px;font-size:8.5px;color:#333;-webkit-text-stroke:0.3px #333;letter-spacing:-0.2px">9.93%</div>
<div class="a" style="left:24.4px;top:610.35px;width:455.1px;height:15.25px;background:#f3f3f4"></div>
<div class="a" style="left:479.5px;top:610.35px;width:59.5px;height:15.25px;background:#d5e3f5"></div>
<div class="t" style="left:29.2px;top:608.48px;font-size:8.5px;letter-spacing:-0.03px;color:#333;-webkit-text-stroke:0.2px #333">US - Southeast</div>
<div class="t" style="left:115.80px;width:60px;text-align:right;top:608.48px;font-size:8.5px;color:#555;-webkit-text-stroke:0.12px #555;letter-spacing:-0.3px">6.62%</div>
<div class="t" style="left:175.20px;width:60px;text-align:right;top:608.48px;font-size:8.5px;color:#555;-webkit-text-stroke:0.12px #555;letter-spacing:-0.3px">7.63%</div>
<div class="t" style="left:235.00px;width:60px;text-align:right;top:608.48px;font-size:8.5px;color:#555;-webkit-text-stroke:0.12px #555;letter-spacing:-0.3px">6.26%</div>
<div class="t" style="left:295.00px;width:60px;text-align:right;top:608.48px;font-size:8.5px;color:#555;-webkit-text-stroke:0.12px #555;letter-spacing:-0.3px">6.97%</div>
<div class="t" style="left:354.90px;width:60px;text-align:right;top:608.48px;font-size:8.5px;color:#555;-webkit-text-stroke:0.12px #555;letter-spacing:-0.3px">0.71%</div>
<div class="t" style="left:414.90px;width:60px;text-align:right;top:608.48px;font-size:8.5px;color:#555;-webkit-text-stroke:0.12px #555;letter-spacing:-0.3px">3.19%</div>
<div class="t" style="left:474.40px;width:60px;text-align:right;top:608.48px;font-size:8.5px;color:#333;-webkit-text-stroke:0.3px #333;letter-spacing:-0.2px">6.34%</div>
<div class="a" style="left:120.00px;top:457.7px;width:1px;height:167.3px;background:#d3d6da"></div>
<div class="a" style="left:179.90px;top:472.3px;width:1px;height:152.7px;background:#d3d6da"></div>
<div class="a" style="left:239.30px;top:472.3px;width:1px;height:152.7px;background:#d3d6da"></div>
<div class="a" style="left:299.10px;top:472.3px;width:1px;height:152.7px;background:#d3d6da"></div>
<div class="a" style="left:359.10px;top:472.3px;width:1px;height:152.7px;background:#d3d6da"></div>
<div class="a" style="left:419.00px;top:472.3px;width:1px;height:152.7px;background:#d3d6da"></div>
<div class="a" style="left:479.00px;top:457.7px;width:1px;height:167.3px;background:#d3d6da"></div>
<div class="a" style="left:538.50px;top:457.7px;width:1px;height:167.3px;background:#d3d6da"></div>
<div class="t" style="left:125.1px;top:456.40px;font-size:8.4px;color:#3a3a3a;-webkit-text-stroke:0.25px #3a3a3a;letter-spacing:-0.18px">Exp Code Group / (Summary Fields)</div>
<div class="t" style="left:125.20px;top:471.35px;font-size:8.4px;color:#3a3a3a;-webkit-text-stroke:0.25px #3a3a3a;letter-spacing:-0.18px">Base Pay</div>
<div class="t" style="left:125.20px;top:486.80px;font-size:8.4px;color:#3a3a3a;-webkit-text-stroke:0.25px #3a3a3a;letter-spacing:-0.18px">% of Expense</div>
<div class="t" style="left:185.10px;top:471.35px;font-size:8.4px;color:#3a3a3a;-webkit-text-stroke:0.25px #3a3a3a;letter-spacing:-0.18px">Benefits</div>
<div class="t" style="left:185.10px;top:486.80px;font-size:8.4px;color:#3a3a3a;-webkit-text-stroke:0.25px #3a3a3a;letter-spacing:-0.18px">% of Expense</div>
<div class="t" style="left:244.50px;top:471.35px;font-size:8.4px;color:#3a3a3a;-webkit-text-stroke:0.25px #3a3a3a;letter-spacing:-0.18px">Overtime Pay</div>
<div class="t" style="left:244.50px;top:486.80px;font-size:8.4px;color:#3a3a3a;-webkit-text-stroke:0.25px #3a3a3a;letter-spacing:-0.18px">% of Expense</div>
<div class="t" style="left:304.30px;top:471.35px;font-size:8.4px;color:#3a3a3a;-webkit-text-stroke:0.25px #3a3a3a;letter-spacing:-0.18px">SUI</div>
<div class="t" style="left:304.30px;top:486.80px;font-size:8.4px;color:#3a3a3a;-webkit-text-stroke:0.25px #3a3a3a;letter-spacing:-0.18px">% of Expense</div>
<div class="t" style="left:364.30px;top:471.35px;font-size:8.4px;color:#3a3a3a;-webkit-text-stroke:0.25px #3a3a3a;letter-spacing:-0.18px">Taxes &amp; Misc</div>
<div class="t" style="left:364.30px;top:486.80px;font-size:8.4px;color:#3a3a3a;-webkit-text-stroke:0.25px #3a3a3a;letter-spacing:-0.18px">% of Expense</div>
<div class="t" style="left:424.20px;top:471.35px;font-size:8.4px;color:#3a3a3a;-webkit-text-stroke:0.25px #3a3a3a;letter-spacing:-0.18px">Variable/Oth...</div>
<div class="t" style="left:424.20px;top:486.80px;font-size:8.4px;color:#3a3a3a;-webkit-text-stroke:0.25px #3a3a3a;letter-spacing:-0.18px">% of Expense</div>
<div class="t" style="left:484.20px;top:471.35px;font-size:8.4px;color:#3a3a3a;-webkit-text-stroke:0.25px #3a3a3a;letter-spacing:-0.18px">Totals</div>
<div class="t" style="left:484.20px;top:486.80px;font-size:8.4px;color:#3a3a3a;-webkit-text-stroke:0.25px #3a3a3a;letter-spacing:-0.18px">% of Expense</div>
<div class="t" style="left:29.2px;top:487.80px;font-size:8.4px;color:#3a3a3a;-webkit-text-stroke:0.25px #3a3a3a;letter-spacing:-0.18px">Reporting_Region</div>
<!-- /CARD3 -->
<!-- CARD4 CONTENT -->
<div class="t ctitle" style="left:684.4px;top:424.2px;letter-spacing:-0.30px">OT Expense by Company</div>
<svg class="a" style="left:937.5px;top:427.3px" width="34" height="13" viewBox="0 0 34 13"><path d="M6.2 1.4 L10.8 1.4 L10.8 5.6" fill="none" stroke="#444" stroke-width="1.8"/><path d="M1.4 6 L1.4 10.1 L5.9 10.1" fill="none" stroke="#444" stroke-width="1.8"/><circle cx="28.4" cy="1.1" r="1.35" fill="#444"/><circle cx="28.4" cy="5.9" r="1.35" fill="#444"/><circle cx="28.4" cy="10.7" r="1.35" fill="#444"/></svg>
<div class="t sm" style="left:873.4px;width:100px;text-align:right;top:442.4px;color:#4a4a4a;-webkit-text-stroke:0.15px #4a4a4a;letter-spacing:-0.05px">13 items</div>
<div class="grid" style="left:738.8px;top:560.70px;width:237.5px;background:#cfd1d4"></div>
<div class="t sm" style="left:672px;width:61px;text-align:right;top:551.20px;letter-spacing:-0.3px">0</div>
<div class="grid" style="left:738.8px;top:529.23px;width:237.5px;background:#efefef"></div>
<div class="t sm" style="left:672px;width:61px;text-align:right;top:519.73px;letter-spacing:-0.3px">20,000</div>
<div class="grid" style="left:738.8px;top:497.76px;width:237.5px;background:#efefef"></div>
<div class="t sm" style="left:672px;width:61px;text-align:right;top:488.26px;letter-spacing:-0.3px">40,000</div>
<div class="grid" style="left:738.8px;top:466.29px;width:237.5px;background:#efefef"></div>
<div class="t sm" style="left:672px;width:61px;text-align:right;top:456.79px;letter-spacing:-0.3px">60,000</div>
<div class="a" style="left:757.6px;top:498.20px;width:40.90px;height:63.00px;background:#0a73e1"></div>
<div class="a" style="left:757.6px;top:481.40px;width:40.90px;height:16.80px;background:#fcbf2b"></div>
<div class="a" style="left:757.6px;top:477.20px;width:40.90px;height:4.20px;background:#c65fd6"></div>
<div class="a" style="left:757.6px;top:475.80px;width:40.90px;height:1.40px;background:#b8364f"></div>
<div class="a" style="left:836.8px;top:488.40px;width:41.20px;height:72.80px;background:#0a73e1"></div>
<div class="a" style="left:836.8px;top:471.00px;width:41.20px;height:17.40px;background:#fcbf2b"></div>
<div class="a" style="left:836.8px;top:465.40px;width:41.20px;height:5.60px;background:#c65fd6"></div>
<div class="a" style="left:836.8px;top:464.60px;width:41.20px;height:0.80px;background:#b8364f"></div>
<div class="a" style="left:916px;top:497.00px;width:41.20px;height:64.20px;background:#0a73e1"></div>
<div class="a" style="left:916px;top:480.80px;width:41.20px;height:16.20px;background:#fcbf2b"></div>
<div class="a" style="left:916px;top:475.80px;width:41.20px;height:5.00px;background:#c65fd6"></div>
<div class="a" style="left:916px;top:474.60px;width:41.20px;height:1.20px;background:#b8364f"></div>
<div class="t sm" style="left:748px;width:60px;text-align:center;top:562.4px;letter-spacing:-0.2px">2,019</div>
<div class="t sm" style="left:827.4px;width:60px;text-align:center;top:562.4px;letter-spacing:-0.2px">2,020</div>
<div class="t sm" style="left:906.6px;width:60px;text-align:center;top:562.4px;letter-spacing:-0.2px">2,021</div>
<div class="t ax" style="left:807.3px;width:100px;text-align:center;top:576.7px;letter-spacing:-0.12px">Pay Period Year</div>
<div class="t ax" style="left:651px;top:498.8px;width:80px;text-align:center;letter-spacing:-0.31px;transform:rotate(-90deg)">SUM(Exp Amt)</div>
<div class="a" style="left:685.5px;top:609.8px;width:11px;height:10.6px;border-radius:1.5px;background:#13a07f"></div>
<div class="t sm" style="left:702px;top:605px;color:#555;letter-spacing:-0.34px">Global Modern Services Pty. Ltd. (Australia)</div>
<!-- /CARD4 --><!-- /CARD1 -->

<div class="a" style="left:0;top:623px;width:1000px;height:2px;background:#eaebed"></div>
</body></html>
